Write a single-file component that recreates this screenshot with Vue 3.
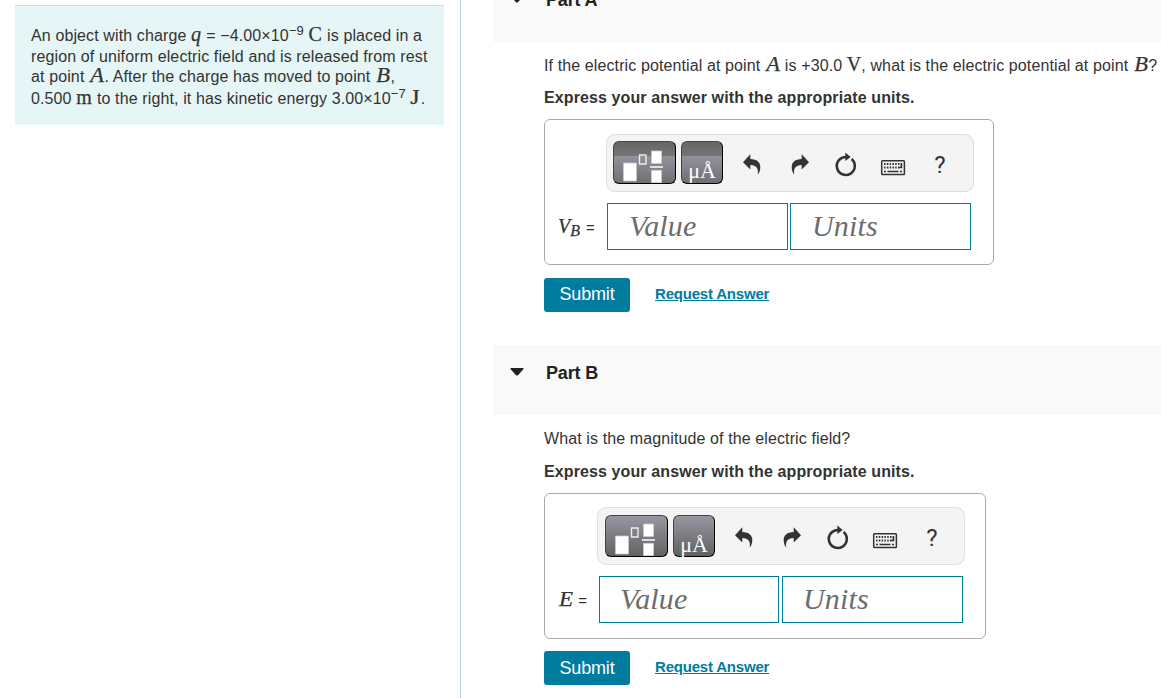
<script setup>
    const parts = [
        {id:'a', title:'Part A'},
        {id:'b', title:'Part B'}
    ];
</script>

<template>
    <div class="page">
        <aside class="sidebar">
            <div class="problem">
                <div class="line -one">An object with charge <i class="m">q</i> = −4.00×10<sup>−9</sup> <span class="m">C</span> is placed in a</div>
                <div class="line -two">region of uniform electric field and is released from rest</div>
                <div class="line -three">at point <i class="m -cap">A</i>. After the charge has moved to point <i class="m -cap">B</i>,</div>
                <div class="line -four">0.500 <span class="m">m</span> to the right, it has kinetic energy 3.00×10<sup>−7</sup> <span class="m -j">J</span>.</div>
            </div>
        </aside>
        <main class="content">
            <section v-for="part in parts" :key="part.id" class="part" :class="'-' + part.id">
                <header class="part-header">
                    <svg class="caret" width="14" height="8" viewBox="0 0 14 8"><path d="M1 0H13Q14 .4 13.3 1.3L8 7.2Q7 8 6 7.2L.7 1.3Q0 .4 1 0Z" fill="#222" /></svg>
                    <h2>{{ part.title }}</h2>
                </header>
                <div class="part-body">
                    <p v-if="part.id == 'a'" class="question">If the electric potential at point <i class="m -cap">A</i> is +30.0 <span class="m">V</span>, what is the electric potential at point <i class="m -cap">B</i>?</p>
                    <p v-else class="question">What is the magnitude of the electric field?</p>
                    <p class="express">Express your answer with the appropriate units.</p>
                    <div class="answer">
                        <div class="toolbar">
                            <button class="tool -templates" type="button">
                                <svg width="61" height="40" viewBox="0 0 61 40">
                                    <path d="M9.500 20h13v18h-13zM37.500 8h10v12.500h-10zM37.500 27.300h10v12.500h-10z" fill="#fff" stroke="#ccc" stroke-width=".8" />
                                    <path d="M36 24h13" stroke="#fff" stroke-width="1.500" />
                                    <path d="M25.500 12h6.500v9h-6.500z" fill="none" stroke="#eee" stroke-width="1.400" />
                                </svg>
                            </button>
                            <button class="tool -symbols" type="button"><span>μÅ</span></button>
                            <svg class="icon" viewBox="0 0 28 28"><path d="M5 11.300L12.300 3.300V8C19 8 22.500 11.500 22.300 16.500C22.200 19.500 21.200 22 19.800 23.500C20.600 17 18.500 14.200 12.300 14V18.500Z" fill="#333" /></svg>
                            <svg class="icon" viewBox="0 0 28 28"><path d="M24 11.300L16.700 3.300V8C10 8 6.500 11.500 6.700 16.500C6.800 19.500 7.800 22 9.200 23.500C8.400 17 10.500 14.200 16.700 14V18.500Z" fill="#333" /></svg>
                            <svg class="icon" viewBox="0 0 28 28">
                                <path d="M14.500 6A9 9 0 1 0 19.500 8" fill="none" stroke="#333" stroke-width="2.600" />
                                <path d="M13.300 1.500L18.700 6L13.300 10.100Z" fill="#333" />
                            </svg>
                            <svg class="icon" viewBox="0 0 28 28">
                                <rect x="2.700" y="9.700" width="22.700" height="13.800" rx=".8" fill="none" stroke="#333" stroke-width="1.500" />
                                <path d="M5 13H21M5 16.500H20" fill="none" stroke="#333" stroke-width="1.800" stroke-dasharray="1.500 1.300" />
                                <path d="M5 20.500H7M8.500 20.500H19.500M21 20.500H23M22.400 12.100V16.500H19.500" fill="none" stroke="#333" stroke-width="1.700" />
                            </svg>
                            <span class="help">?</span>
                        </div>
                        <div class="entry">
                            <label v-if="part.id == 'a'"><i>V<sub>B</sub></i><span class="equals">=</span></label>
                            <label v-else><i class="wide">E</i><span class="equals">=</span></label>
                            <div class="field">Value</div>
                            <div class="field">Units</div>
                        </div>
                    </div>
                    <div class="actions">
                        <button class="submit" type="button">Submit</button>
                        <a class="request">Request Answer</a>
                    </div>
                </div>
            </section>
        </main>
    </div>
</template>

<style>
    body {
        margin: 0;
        background: #fff;
    }
</style>

<style scoped>
    .page {
        display: flex;
        height: 698px;
        overflow: hidden;
        font-family: "Liberation Sans", Arial, sans-serif;
        font-size: 16px;
        color: #333;
    }

    .sidebar {
        flex: none;
        box-sizing: border-box;
        width: 461px;
        padding: 5px 16px 0 15px;
        border-right: 1px solid #b4cbdc;
    }

    .problem {
        box-sizing: border-box;
        height: 120px;
        padding: 20px 0 0 16px;
        border-top: 1px solid #d5dddd;
        background: #e6f6f6;
    }

    .line {
        height: 20px;
        line-height: 20px;
        letter-spacing: .12px;
        white-space: nowrap;
    }

    .line.-one {
        height: 21px;
    }

    .line.-three {
        height: 22px;
    }

    .m {
        font-family: "Liberation Serif", serif;
        font-size: 20px;
        line-height: 0;
        -webkit-text-stroke: .25px #333;
    }

    .line .m {
        margin-right: .5px;
    }

    .m.-cap,
    .line .m.-cap {
        display: inline-block;
        margin: 0 1.3px 0 1.8px;
        transform: scaleX(1.12);
    }

    .line .m.-j {
        display: inline-block;
        margin: 0 1.5px 0 1px;
        transform: scaleX(1.2);
    }

    sup {
        font-size: 13px;
        line-height: 0;
        vertical-align: 6px;
    }

    .content {
        flex: 1;
        min-width: 0;
        margin: -28px 0 0 32px;
    }

    .part.-a {
        height: 373px;
    }

    .part-header {
        display: flex;
        box-sizing: border-box;
        height: 70px;
        padding: 18px 0 0 17px;
        background: #f9f9f9;
    }

    .caret {
        margin: 5px 22px 0 0;
    }

    h2 {
        margin: 0;
        font-size: 18px;
        line-height: 20px;
        letter-spacing: -.15px;
        color: #222;
    }

    .part-body {
        padding: 14px 0 0 51px;
    }

    p {
        margin: 0;
        line-height: 20px;
        height: 20px;
        letter-spacing: .11px;
        white-space: nowrap;
    }

    .express {
        margin-top: 12px;
        font-weight: bold;
    }

    .-b .express {
        margin-top: 13px;
    }

    .answer {
        box-sizing: border-box;
        width: 450px;
        height: 146px;
        margin-top: 11px;
        padding: 14px 0 0 13px;
        border: 1px solid #aaa;
        border-radius: 6px;
    }

    .-b .answer {
        width: 442px;
        padding-top: 13px;
    }

    .toolbar {
        display: flex;
        box-sizing: border-box;
        width: 368px;
        height: 58px;
        margin-left: 48px;
        padding: 6px;
        border: 1px solid #ddd;
        border-radius: 9px;
        background: #f4f4f4;
    }

    .-b .toolbar {
        margin-left: 39px;
        padding: 7px;
    }

    .tool {
        flex: none;
        box-sizing: border-box;
        height: 43px;
        padding: 0;
        border: 1px solid #444;
        border-right-color: #000;
        border-bottom-color: #000;
        border-radius: 6px;
        background: linear-gradient(#666, #747474 14px, #93919c 14px, #706f74);
        color: #fff;
    }

    .-b .tool {
        height: 42px;
        background: linear-gradient(#9896a1, #626262);
    }

    .tool svg {
        display: block;
    }

    .tool.-symbols {
        width: 42px;
        margin: 0 15px 0 5px;
        font-family: "Liberation Serif", serif;
        font-size: 22px;
        line-height: 24px;
    }

    .tool.-templates {
        width: 63px;
    }

    .tool.-symbols span {
        display: block;
        padding-top: 17px;
    }

    .icon {
        flex: none;
        width: 28px;
        height: 28px;
        margin: 10px 19px 0 0;
    }

    .-b .icon {
        margin-top: 9px;
    }

    .help {
        width: 28px;
        margin-top: 10px;
        font-family: Roboto, sans-serif;
        font-size: 24px;
        line-height: 28px;
        text-align: center;
        color: #333;
    }

    .-b .help {
        margin-top: 9px;
    }

    .entry {
        display: flex;
        margin-top: 11px;
    }

    label {
        width: 49px;
        font-size: 16px;
        line-height: 46px;
        white-space: nowrap;
    }

    .-b label {
        width: 41px;
    }

    label i {
        font-family: "Liberation Serif", serif;
        font-size: 20px;
        -webkit-text-stroke: .25px #333;
    }

    label .wide {
        display: inline-block;
        margin: 0 1px 0 2px;
        transform: scaleX(1.15);
    }

    label sub {
        font-size: 16px;
        line-height: 0;
        vertical-align: -3px;
    }

    .equals {
        margin-left: 6px;
        font-size: 15px;
    }

    .-b .equals {
        margin-left: 5px;
    }

    .field {
        box-sizing: border-box;
        width: 181px;
        height: 47px;
        margin-right: 2px;
        padding-left: 21px;
        border: 1px solid #007c9b;
        font-family: "Liberation Serif", serif;
        font-size: 30px;
        font-style: italic;
        line-height: 43px;
        letter-spacing: .15px;
        color: #6c6c6c;
    }

    .-b .field {
        padding-left: 20px;
    }

    .-b .field:nth-child(2) {
        width: 180px;
        margin-right: 3px;
    }

    .actions {
        display: flex;
        margin-top: 13px;
    }

    .-b .actions {
        margin-top: 12px;
    }

    .submit {
        width: 86px;
        height: 34px;
        padding: 0 0 2px;
        border: none;
        border-radius: 3px;
        background: #007c9e;
        font-family: inherit;
        font-size: 18px;
        letter-spacing: -.15px;
        color: #fff;
    }

    .-b .submit {
        padding-bottom: 0;
    }

    .request {
        margin-left: 25px;
        font-size: 15px;
        font-weight: bold;
        line-height: 32px;
        letter-spacing: -.2px;
        text-decoration: underline;
        color: #007c9e;
    }
</style>
